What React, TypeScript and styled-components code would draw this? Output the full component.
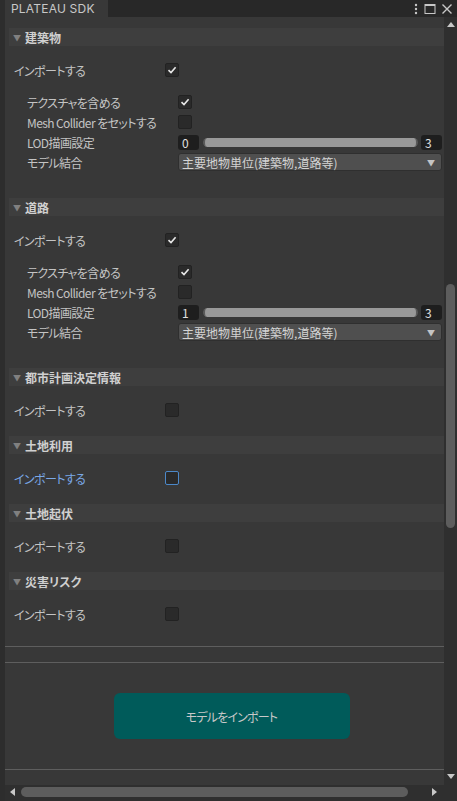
import React from "react";
import styled, { createGlobalStyle } from "styled-components";

const GlobalStyle = createGlobalStyle`
  html, body {
    margin: 0;
    padding: 0;
    background: #383838;
    overflow: hidden;
  }
  * {
    box-sizing: border-box;
  }
`;

const FONT = `"Noto Sans CJK JP", "Noto Sans", sans-serif`;
const TAB_FONT = `Inter, "Noto Sans CJK JP", sans-serif`;

const Window = styled.div`
  width: 457px;
  height: 801px;
  display: flex;
  flex-direction: column;
  background: #383838;
  border-left: 5px solid #2d2d2d;
  font-family: ${FONT};
  font-feature-settings: "palt";
  color: #c4c4c4;
  overflow: hidden;
`;

const TabBar = styled.div`
  height: 17px;
  flex-shrink: 0;
  display: flex;
  background: #282828;
`;

const Tab = styled.div`
  width: 103px;
  background: #383838;
  padding-left: 6px;
  font-family: ${TAB_FONT};
  font-size: 12px;
  line-height: 18px;
  color: #c8c8c8;
  letter-spacing: 0.2px;
`;

const TabFill = styled.div`
  flex: 1;
`;

const WindowButtons = styled.div`
  display: flex;
  align-items: center;
  gap: 5px;
  padding-right: 4px;
`;

const Main = styled.div`
  flex: 1;
  display: flex;
  min-height: 0;
`;

const Content = styled.div`
  flex: 1;
  display: flex;
  flex-direction: column;
  padding-top: 11px;
  overflow: hidden;
`;

const Section = styled.div`
  display: flex;
  flex-direction: column;
`;

const Header = styled.div`
  height: 18px;
  margin-left: 4px;
  display: flex;
  align-items: center;
  background: #3e3e3e;
  font-size: 12px;
  font-weight: 700;
  color: #d0d0d0;
`;

const Caret = styled.span`
  width: 16px;
  display: flex;
  justify-content: center;
  color: #808080;
  font-size: 8px;
`;

const Body = styled.div<{ $bottom: number }>`
  display: flex;
  flex-direction: column;
  padding-top: 14px;
  padding-bottom: ${(p) => p.$bottom}px;
`;

const SubGroup = styled.div`
  display: flex;
  flex-direction: column;
  margin-top: 12px;
`;

const Row = styled.div<{ $indent: number }>`
  height: 20px;
  display: flex;
  align-items: center;
  padding-left: ${(p) => p.$indent}px;
  padding-right: 2px;
`;

const Label = styled.div<{ $focused?: boolean }>`
  width: 151px;
  flex-shrink: 0;
  font-size: 12px;
  letter-spacing: -0.6px;
  white-space: nowrap;
  color: ${(p) => (p.$focused ? "#7aa8e6" : "#c4c4c4")};
`;

const Value = styled.div`
  flex: 1;
  display: flex;
  align-items: center;
  min-width: 0;
`;

const CheckBox = styled.div<{ $focused?: boolean }>`
  width: 14px;
  height: 14px;
  border-radius: 2px;
  background: #2a2a2a;
  border: 1px solid ${(p) => (p.$focused ? "#4c88c8" : "#222222")};
  display: flex;
  align-items: center;
  justify-content: center;
`;

const NumBox = styled.div`
  width: 21px;
  height: 15px;
  flex-shrink: 0;
  border-radius: 3px;
  background: #1e1e1e;
  color: #e0e0e0;
  font-size: 12px;
  line-height: 15px;
  padding-left: 4px;
`;

const Track = styled.div`
  flex: 1;
  height: 9px;
  margin: 0 3px 0 4px;
  background: #999999;
  border-radius: 5px;
  border-left: 2px solid #5a5a5a;
  border-right: 2px solid #5a5a5a;
`;

const Dropdown = styled.div`
  flex: 1;
  height: 18px;
  display: flex;
  align-items: center;
  justify-content: space-between;
  padding: 0 6px 0 3px;
  background: #4f4f4f;
  border: 1px solid #2f2f2f;
  border-radius: 3px;
  font-size: 12px;
  color: #d4d4d4;
  white-space: nowrap;
`;

const DropArrow = styled.span`
  font-size: 8px;
  color: #c4c4c4;
`;

const Divider = styled.div<{ $top: number }>`
  height: 1px;
  flex-shrink: 0;
  margin-top: ${(p) => p.$top}px;
  background: #5e5e5e;
`;

const ButtonArea = styled.div`
  display: flex;
  justify-content: center;
  padding: 30px 0 30px 14px;
`;

const ImportButton = styled.button`
  width: 236px;
  height: 46px;
  border: none;
  border-radius: 6px;
  background: #005b5a;
  color: #c8c8c8;
  font-family: ${FONT};
  font-feature-settings: "palt";
  font-size: 12px;
  letter-spacing: -0.8px;
`;

const VScroll = styled.div`
  width: 13px;
  flex-shrink: 0;
  display: flex;
  flex-direction: column;
  align-items: center;
  background: #2f2f2f;
  padding: 4px 0 4px 0;
`;

const VThumb = styled.div`
  width: 9px;
  height: 244px;
  margin-top: 255px;
  border-radius: 5px;
  background: #5d5d5d;
`;

const ScrollFill = styled.div`
  flex: 1;
`;

const HScrollRow = styled.div`
  height: 16px;
  flex-shrink: 0;
  display: flex;
  background: #2f2f2f;
`;

const HTrack = styled.div`
  flex: 1;
  display: flex;
  align-items: center;
  padding: 0 5px 2px 4px;
  gap: 4px;
`;

const HThumb = styled.div`
  width: 387px;
  height: 10px;
  border-radius: 5px;
  background: #5d5d5d;
`;

const Corner = styled.div`
  width: 13px;
  background: #2f2f2f;
`;

const Check = () => (
  <svg width="10" height="10" viewBox="0 0 10 10">
    <polyline points="1.5,5.2 4,7.6 8.6,2.2" fill="none" stroke="#e8e8e8" strokeWidth="1.6" />
  </svg>
);

const Tri = ({ dir }: { dir: "up" | "down" | "left" | "right" }) => {
  const pts = {
    up: "0,6 4,1 8,6",
    down: "0,1 8,1 4,6",
    left: "6,0 6,8 1,4",
    right: "1,0 1,8 6,4",
  }[dir];
  return (
    <svg width="8" height="8" viewBox="0 0 8 8">
      <polygon points={pts} fill="#c8c8c8" />
    </svg>
  );
};

type SectionData = {
  title: string;
  checked: boolean;
  focused?: boolean;
  sub?: { lodMin: string; lodMax: string };
};

const sections: SectionData[] = [
  { title: "建築物", checked: true, sub: { lodMin: "0", lodMax: "3" } },
  { title: "道路", checked: true, sub: { lodMin: "1", lodMax: "3" } },
  { title: "都市計画決定情報", checked: false },
  { title: "土地利用", checked: false, focused: true },
  { title: "土地起伏", checked: false },
  { title: "災害リスク", checked: false },
];

function PackageSection({ data, last }: { data: SectionData; last: boolean }) {
  return (
    <Section>
      <Header>
        <Caret>▼</Caret>
        {data.title}
      </Header>
      <Body $bottom={data.sub ? 26 : last ? 0 : 16}>
        <Row $indent={9}>
          <Label $focused={data.focused}>インポートする</Label>
          <Value>
            <CheckBox $focused={data.focused}>{data.checked && <Check />}</CheckBox>
          </Value>
        </Row>
        {data.sub && (
          <SubGroup>
            <Row $indent={22}>
              <Label>テクスチャを含める</Label>
              <Value>
                <CheckBox>
                  <Check />
                </CheckBox>
              </Value>
            </Row>
            <Row $indent={22}>
              <Label>Mesh Collider をセットする</Label>
              <Value>
                <CheckBox />
              </Value>
            </Row>
            <Row $indent={22}>
              <Label>LOD描画設定</Label>
              <Value>
                <NumBox>{data.sub.lodMin}</NumBox>
                <Track />
                <NumBox>{data.sub.lodMax}</NumBox>
              </Value>
            </Row>
            <Row $indent={22}>
              <Label>モデル結合</Label>
              <Value>
                <Dropdown>
                  主要地物単位(建築物,道路等)
                  <DropArrow>▼</DropArrow>
                </Dropdown>
              </Value>
            </Row>
          </SubGroup>
        )}
      </Body>
    </Section>
  );
}

export default function App() {
  return (
    <>
      <GlobalStyle />
      <Window>
        <TabBar>
          <Tab>PLATEAU SDK</Tab>
          <TabFill />
          <WindowButtons>
            <svg width="6" height="12" viewBox="0 0 6 12">
              <circle cx="3" cy="2" r="1.2" fill="#c8c8c8" />
              <circle cx="3" cy="6" r="1.2" fill="#c8c8c8" />
              <circle cx="3" cy="10" r="1.2" fill="#c8c8c8" />
            </svg>
            <svg width="12" height="12" viewBox="0 0 12 12">
              <rect x="1" y="1.5" width="10" height="9" fill="none" stroke="#c8c8c8" strokeWidth="1" />
              <rect x="1" y="1" width="10" height="2" fill="#c8c8c8" />
            </svg>
            <svg width="12" height="12" viewBox="0 0 12 12">
              <path d="M1.5 1.5 L10.5 10.5 M10.5 1.5 L1.5 10.5" stroke="#c8c8c8" strokeWidth="1.4" />
            </svg>
          </WindowButtons>
        </TabBar>
        <Main>
          <Content>
            {sections.map((s, i) => (
              <PackageSection key={s.title} data={s} last={i === sections.length - 1} />
            ))}
            <Divider $top={22} />
            <Divider $top={15} />
            <ButtonArea>
              <ImportButton>モデルをインポート</ImportButton>
            </ButtonArea>
            <Divider $top={0} />
          </Content>
          <VScroll>
            <Tri dir="up" />
            <VThumb />
            <ScrollFill />
            <Tri dir="down" />
          </VScroll>
        </Main>
        <HScrollRow>
          <HTrack>
            <Tri dir="left" />
            <HThumb />
            <ScrollFill />
            <Tri dir="right" />
          </HTrack>
          <Corner />
        </HScrollRow>
      </Window>
    </>
  );
}
